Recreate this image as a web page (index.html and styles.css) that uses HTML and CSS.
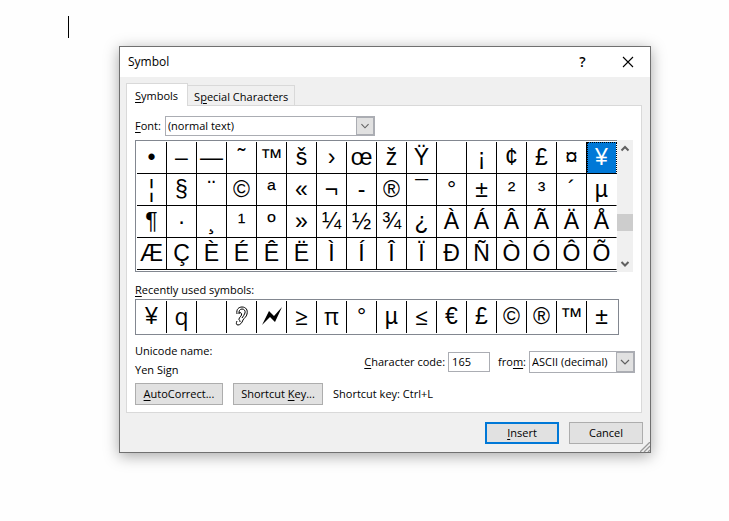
FILE: index.html
```html
<!DOCTYPE html>
<html lang="en">
<head>
    <meta charset="UTF-8">
    <meta name="viewport" content="width=device-width, initial-scale=1.0">
    <title>Symbol</title>
    <link rel="stylesheet" href="styles.css">
</head>
<body>
    <div class="caret"></div>
    <main class="dialog">
        <header class="title-bar">
            <h1>Symbol</h1>
            <button class="title-button" type="button">?</button>
            <button class="title-button" type="button" aria-label="Close">
                <svg width="12" height="12" viewBox="0 0 12 12"><path d="M1 1L11 11M11 1L1 11" fill="none" stroke="#000" stroke-width="1.1"/></svg>
            </button>
        </header>

        <nav class="tabs">
            <button class="tab active" type="button"><u>S</u>ymbols</button>
            <button class="tab" type="button">S<u>p</u>ecial Characters</button>
        </nav>

        <section class="panel">
            <div class="font-row">
                <label for="font"><u>F</u>ont:</label>
                <div class="select font-select">
                    <select id="font">
                        <option>(normal text)</option>
                    </select>
                    <svg viewBox="0 0 16 18"><path d="M4 7L8 11L12 7" /></svg>
                </div>
            </div>

            <div class="symbols">
                <div class="symbol-box">
                    <table class="symbol-table">
                        <tr><td>•</td><td>–</td><td>—</td><td>˜</td><td>™</td><td>š</td><td>›</td><td>œ</td><td>ž</td><td>Ÿ</td><td>&nbsp;</td><td>¡</td><td>¢</td><td>£</td><td>¤</td><td class="selected">¥</td></tr>
                        <tr><td>¦</td><td>§</td><td>¨</td><td>©</td><td>ª</td><td>«</td><td>¬</td><td>-</td><td>®</td><td>¯</td><td>°</td><td>±</td><td>²</td><td>³</td><td>´</td><td>µ</td></tr>
                        <tr><td>¶</td><td>·</td><td>¸</td><td>¹</td><td>º</td><td>»</td><td>¼</td><td>½</td><td>¾</td><td>¿</td><td>À</td><td>Á</td><td>Â</td><td>Ã</td><td>Ä</td><td>Å</td></tr>
                        <tr><td>Æ</td><td>Ç</td><td>È</td><td>É</td><td>Ê</td><td>Ë</td><td>Ì</td><td>Í</td><td>Î</td><td>Ï</td><td>Ð</td><td>Ñ</td><td>Ò</td><td>Ó</td><td>Ô</td><td>Õ</td></tr>
                    </table>
                </div>
                <div class="scrollbar">
                    <svg viewBox="0 0 16 16"><path d="M4.500 10.500L8 7L11.500 10.500" /></svg>
                    <div class="track"><div class="thumb"></div></div>
                    <svg viewBox="0 0 16 16"><path d="M4.500 6L8 9.500L11.500 6" /></svg>
                </div>
            </div>

            <h2><u>R</u>ecently used symbols:</h2>
            <div class="recent-box">
                <table class="symbol-table recent">
                    <tr>
                        <td>¥</td>
                        <td class="humanist">q</td>
                        <td>&nbsp;</td>
                        <td><svg class="ear" width="14" height="20" viewBox="0 0 14 20"><path d="M2 8C1 3 4 1 7 1C11 1 13 4 12 8C11.500 11 9 12 8 14C7 17 5 19 3 19C1 19 1 17 2 15M4 8C3.500 5 5 3 7 3C9.500 3 10.500 5 10 7C9.500 9 8 10 7 12M4 7C5.500 6 7 7 6.500 9C6 10.500 4.500 11 4 13C3.500 14.500 5.500 14 5 16" /></svg></td>
                        <td><svg width="20" height="20" viewBox="0 0 20 20"><path d="M0 19L7 5L12 10L20 1L13 16L8 11Z" /></svg></td>
                        <td class="humanist">≥</td>
                        <td class="humanist">π</td>
                        <td>°</td>
                        <td>µ</td>
                        <td class="humanist">≤</td>
                        <td>€</td>
                        <td>£</td>
                        <td>©</td>
                        <td>®</td>
                        <td>™</td>
                        <td>±</td>
                    </tr>
                </table>
            </div>

            <div class="details">
                <div class="unicode-name">
                    <p>Unicode name:</p>
                    <p>Yen Sign</p>
                </div>
                <div class="code-row">
                    <label for="code"><u>C</u>haracter code:</label>
                    <input id="code" type="text" value="165">
                    <label class="from" for="from">fro<u>m</u>:</label>
                    <div class="select from-select">
                        <select id="from">
                            <option>ASCII (decimal)</option>
                        </select>
                        <svg viewBox="0 0 16 18"><path d="M4 7L8 11L12 7" /></svg>
                    </div>
                </div>
            </div>

            <div class="shortcut-row">
                <button class="button auto" type="button"><u>A</u>utoCorrect...</button>
                <button class="button key" type="button">Shortcut <u>K</u>ey...</button>
                <span>Shortcut key: Ctrl+L</span>
            </div>
        </section>

        <footer class="actions">
            <button class="button primary" type="button"><u>I</u>nsert</button>
            <button class="button" type="button">Cancel</button>
        </footer>
        <svg class="grip" width="10" height="10" viewBox="0 0 10 10"><path d="M0 10L10 0M4 10L10 4M8 10L10 8" /></svg>
    </main>
</body>
</html>
```
FILE: styles.css
```css
/* Global styles */
* {
    box-sizing: border-box;
}

body {
    margin: 0;
    padding: 46px 78px 40px 119px;
    background: #fefefe;
    color: #000;
    font: 11px/16px "Open Sans", "Noto Sans", sans-serif;
}

h1, h2, p {
    margin: 0;
    font-size: 11px;
    font-weight: normal;
}

button, input, select {
    margin: 0;
    color: inherit;
    font: inherit;
}

u {
    text-underline-offset: 2px;
}

/* Text cursor of the document behind the dialog */
.caret {
    position: absolute;
    left: 68px;
    top: 16px;
    width: 1px;
    height: 22px;
    background: #000;
}

/* Dialog window */
.dialog {
    position: relative;
    min-width: 532px;
    border: 1px solid #707070;
    background: #f0f0f0;
    box-shadow: 0 3px 14px rgba(0, 0, 0, 0.35);
}

.title-bar {
    display: flex;
    align-items: center;
    height: 30px;
    padding-left: 8px;
    background: #fff;
}

.title-bar h1 {
    flex: 1;
    font-size: 12px;
}

.title-button {
    display: flex;
    align-items: center;
    justify-content: center;
    width: 45px;
    height: 30px;
    padding: 0;
    border: 0;
    background: none;
    font-size: 14px;
    font-weight: 600;
}

/* Tabs */
.tabs {
    display: flex;
    align-items: flex-end;
    height: 28px;
    padding-left: 6px;
}

.tab {
    height: 20px;
    padding: 0 6px;
    border: 1px solid #d9d9d9;
    border-width: 1px 1px 0 0;
    background: #f0f0f0;
    line-height: 21px;
}

.tab.active {
    position: relative;
    height: 23px;
    margin-bottom: -1px;
    padding: 0 9px 0 8px;
    border-left-width: 1px;
    background: #fff;
    line-height: 21px;
}

.panel {
    margin: 0 8px 0 6px;
    padding: 10px 6px 7px 8px;
    border: 1px solid #d9d9d9;
    background: #fff;
}

/* Form fields */
.font-row {
    display: flex;
    align-items: center;
    gap: 4px;
    margin-bottom: 4px;
}

.select {
    display: flex;
    border: 1px solid #abadb3;
    background: #fff;
}

.select select {
    flex: 1;
    min-width: 0;
    padding: 0 2px;
    border: 0;
    background: none;
    appearance: none;
}

.select svg {
    width: 18px;
    border: 1px solid #abadb3;
    background: #e1e1e1;
}

.select path {
    fill: none;
    stroke: #606060;
    stroke-width: 1.2;
}

.font-select {
    width: 210px;
    height: 20px;
}

.from-select {
    width: 106px;
    height: 22px;
}

/* Symbol tables */
.symbols {
    display: flex;
    margin-right: 2px;
}

.symbol-box {
    flex: 1;
    padding: 1px 0 1px 1px;
    border: 1px solid #828790;
    border-right: 0;
}

.symbol-table {
    width: 100%;
    border-spacing: 0;
    table-layout: fixed;
    font: 23px/28px "Liberation Sans", Arial, sans-serif;
}

.symbol-table td {
    height: 32px;
    padding: 0 0 2px;
    border: 1px solid #000;
    border-width: 0 1px 1px 0;
    text-align: center;
    vertical-align: middle;
    white-space: nowrap;
}

.symbol-table td:last-child {
    border-right-color: transparent;
}

.symbol-table .selected {
    outline: 1px dotted #000;
    outline-offset: -1px;
    background: #0078d7;
    background-clip: padding-box;
    color: #fff;
}

.symbol-table.recent td {
    border-bottom: 0;
}

.symbol-table .humanist {
    font-family: "Open Sans", "Noto Sans", sans-serif;
    line-height: 26px;
}

.symbol-table svg {
    display: block;
    margin: 0 auto;
}

.ear path {
    fill: none;
    stroke: #000;
    stroke-width: 1;
}

.recent-box {
    margin-right: 16px;
    padding: 1px;
    border: 1px solid #828790;
}

h2 {
    margin: 10px 0 1px;
}

/* Scrollbar */
.scrollbar {
    display: flex;
    flex-direction: column;
    width: 16px;
    background: #f0f0f0;
}

.scrollbar path {
    fill: none;
    stroke: #606060;
    stroke-width: 2;
}

.track {
    display: flex;
    flex: 1;
    flex-direction: column;
    justify-content: flex-end;
    padding-bottom: 25px;
}

.thumb {
    height: 17px;
    background: #cdcdcd;
}

/* Details */
.details {
    display: flex;
    justify-content: space-between;
    margin-top: 8px;
}

.unicode-name {
    display: flex;
    flex-direction: column;
    gap: 3px;
}

.code-row {
    display: flex;
    align-items: center;
    padding-top: 3px;
}

.code-row input {
    width: 42px;
    height: 20px;
    margin-left: 3px;
    padding: 0 3px 2px;
    border: 1px solid #abadb3;
}

.from {
    margin: 0 3px 0 8px;
}

.shortcut-row {
    display: flex;
    align-items: center;
    gap: 10px;
    margin-top: 5px;
}

.button {
    width: 74px;
    height: 22px;
    padding: 0;
    border: 1px solid #adadad;
    background: #e1e1e1;
    line-height: 18px;
}

.button.auto {
    width: 88px;
}

.button.key {
    width: 90px;
}

.button.primary {
    border: 2px solid #0078d7;
}

.actions {
    display: flex;
    justify-content: flex-end;
    gap: 10px;
    padding: 9px 7px 8px;
}

.grip {
    position: absolute;
    right: 0;
    bottom: 0;
}

.grip path {
    fill: none;
    stroke: #999;
    stroke-width: 1.3;
}
```
